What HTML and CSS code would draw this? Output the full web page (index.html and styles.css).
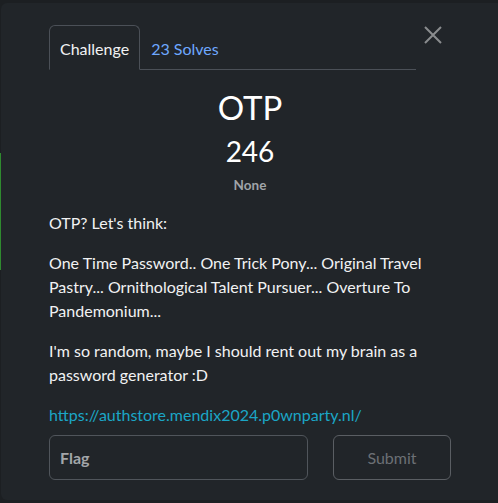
FILE: index.html
```html
<!DOCTYPE html>
<html>
<head>
<meta charset="utf-8">
<link rel="stylesheet" href="styles.css">
</head>
<body>
<div class="backdrop">
  <div class="side-strip"></div>
  <div class="modal">
    <button class="close" aria-label="Close">
      <svg width="18" height="18" viewBox="0 0 18 18"><path d="M1 1L17 17M17 1L1 17" stroke="#8a8c8e" stroke-width="2" fill="none"/></svg>
    </button>
    <div class="body">
      <ul class="tabs">
        <li class="tab active">Challenge</li>
        <li class="tab">23 Solves</li>
      </ul>
      <h2 class="title">OTP</h2>
      <h3 class="value">246</h3>
      <div class="tags">None</div>
      <div class="desc">
        <p>OTP? Let's think:</p>
        <p>One Time Password.. One Trick Pony... Original Travel Pastry... Ornithological Talent Pursuer... Overture To Pandemonium...</p>
        <p>I'm so random, maybe I should rent out my brain as a password generator :D</p>
        <p class="last"><a class="link" href="#">https://authstore.mendix2024.p0wnparty.nl/</a></p>
      </div>
      <form class="submit-row">
        <input class="flag" type="text" placeholder="Flag">
        <button class="btn" type="button">Submit</button>
      </form>
    </div>
  </div>
</div>
</body>
</html>
```
FILE: styles.css
```css
html, body {
  margin: 0;
  padding: 0;
  background: #1c1f22;
  height: 100%;
  overflow: hidden;
  font-family: Lato, "Open Sans", sans-serif;
}
.backdrop {
  position: relative;
  height: 100%;
  padding: 3px 0 0 1px;
  box-sizing: border-box;
}
.side-strip {
  position: absolute;
  left: 0;
  top: 153px;
  width: 1px;
  height: 117px;
  background: #2f8a2f;
}
.modal {
  position: relative;
  background: #212529;
  border-radius: 6px 0 0 6px;
  height: 497px;
  width: 520px;
}
.close {
  position: absolute;
  left: 423px;
  top: 23px;
  background: none;
  border: 0;
  padding: 0;
  width: 18px;
  height: 18px;
  cursor: pointer;
}
.body {
  padding: 22px 0 0 48px;
  width: 402px;
}
.tabs {
  list-style: none;
  margin: 0;
  padding: 0;
  display: flex;
  width: 367px;
  border-bottom: 1px solid #4b5057;
}
.tab {
  font-size: 16px;
  line-height: 19px;
  color: #6ea8fe;
  padding: 13px 10px 11px;
  border: 1px solid transparent;
  border-radius: 6px 6px 0 0;
  margin-bottom: -1px;
}
.tab.active {
  color: #f1f2f3;
  border-color: #4b5057;
  border-bottom-color: #212529;
  background: #212529;
}
.title {
  margin: 18px 0 0;
  text-align: center;
  font-size: 33px;
  font-weight: 400;
  color: #ffffff;
  line-height: 1.2;
}
.value {
  margin: 7px 0 0;
  text-align: center;
  font-size: 28px;
  font-weight: 400;
  color: #ffffff;
  line-height: 1.2;
}
.tags {
  margin-top: 9px;
  text-align: center;
  font-size: 13.5px;
  font-weight: 700;
  color: #a0a4a8;
}
.desc {
  margin-top: 18px;
  color: #f1f2f3;
  font-size: 16px;
  line-height: 24px;
}
.desc p {
  margin: 0 0 16px;
}
.desc p.last {
  margin-bottom: 8px;
}
.link {
  color: #1ba6c6;
  text-decoration: none;
}
.submit-row {
  display: flex;
  gap: 25px;
  margin-top: 0;
}
.flag {
  width: 259px;
  height: 45px;
  box-sizing: border-box;
  background: #212529;
  border: 1px solid #50555b;
  border-radius: 6px;
  padding: 0 10px;
  font-family: Lato, sans-serif;
  font-size: 16px;
  font-weight: 700;
  color: #f1f2f3;
  outline: none;
}
.flag::placeholder {
  color: #a3a6a9;
}
.btn {
  width: 118px;
  height: 45px;
  box-sizing: border-box;
  background: #212529;
  border: 1px solid #5a5e63;
  border-radius: 6px;
  font-family: Lato, sans-serif;
  font-size: 16px;
  color: #6c7075;
}
```
